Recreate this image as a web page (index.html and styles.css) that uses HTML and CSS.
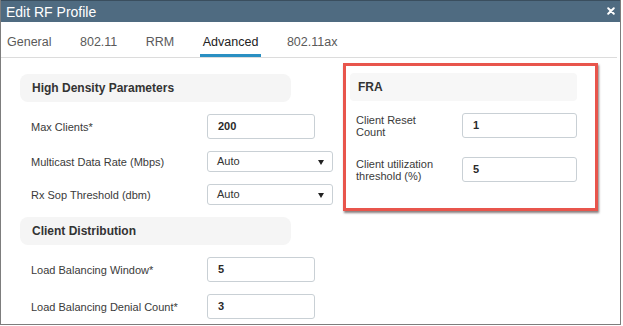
FILE: index.html
```html
<!DOCTYPE html>
<html lang="en">
<head>
    <meta charset="UTF-8">
    <title>Edit RF Profile</title>
    <link rel="stylesheet" href="styles.css">
</head>
<body>
<div class="dialog">
    <div class="titlebar">
        <span class="title">Edit RF Profile</span>
        <svg class="close" viewBox="0 0 10 10" width="8" height="8">
            <path d="M1.5 1.5 L8.5 8.5 M8.5 1.5 L1.5 8.5" stroke="#fff" stroke-width="2.4" stroke-linecap="round"/>
        </svg>
    </div>

    <div class="tabs">
        <div class="tab">General</div>
        <div class="tab">802.11</div>
        <div class="tab">RRM</div>
        <div class="tab active">Advanced</div>
        <div class="tab">802.11ax</div>
    </div>

    <div class="content">
        <div class="left">
            <div class="section-title">High Density Parameters</div>
            <div class="field">
                <label>Max Clients*</label>
                <div class="input">200</div>
            </div>
            <div class="field">
                <label>Multicast Data Rate (Mbps)</label>
                <div class="select">Auto<span class="caret"></span></div>
            </div>
            <div class="field">
                <label>Rx Sop Threshold (dbm)</label>
                <div class="select">Auto<span class="caret"></span></div>
            </div>

            <div class="section-title">Client Distribution</div>
            <div class="field">
                <label>Load Balancing Window*</label>
                <div class="input">5</div>
            </div>
            <div class="field">
                <label>Load Balancing Denial Count*</label>
                <div class="input">3</div>
            </div>
        </div>

        <div class="fra">
            <div class="section-title">FRA</div>
            <div class="fra-field first">
                <label>Client Reset Count</label>
                <div class="input">1</div>
            </div>
            <div class="fra-field">
                <label>Client utilization threshold (%)</label>
                <div class="input">5</div>
            </div>
        </div>
    </div>
</div>
</body>
</html>
```

FILE: styles.css
```css
body {
    margin: 0;
    padding: 0;
    font-family: "Liberation Sans", Arial, Helvetica, sans-serif;
    background: #fff;
    color: #333;
}

.dialog {
    box-sizing: border-box;
    width: 621px;
    height: 325px;
    border: 1px solid #7d7d7d;
    border-top: none;
    background: #fff;
}

.titlebar {
    display: flex;
    align-items: center;
    justify-content: space-between;
    height: 22px;
    padding: 0 5px 0 5px;
    background: #4f6b81;
    border-top: 1px solid #3a4e5e;
    box-sizing: border-box;
}

.title {
    color: #fff;
    font-size: 14px;
    line-height: 16px;
}

.close {
    display: block;
    margin-top: -2px;
}

.tabs {
    display: flex;
    gap: 22.5px;
    padding-left: 3px;
    margin-right: 3px;
    border-bottom: 1px solid #dcdcdc;
}

.tab {
    padding: 13px 3px 4px;
    font-size: 12.5px;
    line-height: 15px;
    color: #5a5a5a;
    border-bottom: 3px solid transparent;
}

.tab.active {
    color: #222;
    border-bottom-color: #2a8fc2;
}

.content {
    display: flex;
    align-items: flex-start;
    gap: 10px;
    padding-left: 19px;
}

.left {
    width: 313px;
    padding-top: 16px;
}

.section-title {
    box-sizing: border-box;
    width: 271px;
    height: 28px;
    padding-left: 12px;
    background: #f5f5f5;
    border-radius: 8px;
    font-size: 12px;
    font-weight: bold;
    line-height: 28px;
    color: #333;
}

.left .section-title + .field,
.left .field + .field,
.left .field + .section-title {
    margin-top: 12px;
}

.field {
    display: flex;
    align-items: center;
    padding-left: 11px;
}

.field label {
    width: 176px;
    font-size: 11px;
    color: #3a3a3a;
}

.input {
    box-sizing: border-box;
    width: 108px;
    height: 25px;
    padding-left: 10px;
    border: 1px solid #c9d0d5;
    border-radius: 3px;
    font-size: 11px;
    font-weight: bold;
    line-height: 23px;
    color: #2a2a2a;
}

.select {
    position: relative;
    box-sizing: border-box;
    width: 126px;
    height: 21px;
    padding-left: 9px;
    border: 1px solid #c9d0d5;
    border-radius: 3px;
    font-size: 11px;
    line-height: 19px;
    color: #333;
}

.caret {
    position: absolute;
    right: 8px;
    top: 8px;
    border-left: 3px solid transparent;
    border-right: 3px solid transparent;
    border-top: 5px solid #222;
}

.fra {
    width: 255px;
    box-sizing: border-box;
    margin-top: 5px;
    padding: 7px 18px 26px 4px;
    border: 3px solid #e8554c;
    box-shadow: 1px 2px 2px rgba(60, 40, 40, 0.6);
}

.fra .section-title {
    width: 227px;
    padding-left: 8px;
    background: #f7f7f7;
    border-radius: 4px;
}

.fra-field {
    display: flex;
    align-items: center;
    padding-left: 6px;
    margin-top: 19px;
}

.fra-field.first {
    margin-top: 12px;
}

.fra-field label {
    width: 82px;
    font-size: 11px;
    line-height: 12px;
    color: #3a3a3a;
}

.fra-field .input {
    width: 115px;
    margin-left: auto;
}
```
